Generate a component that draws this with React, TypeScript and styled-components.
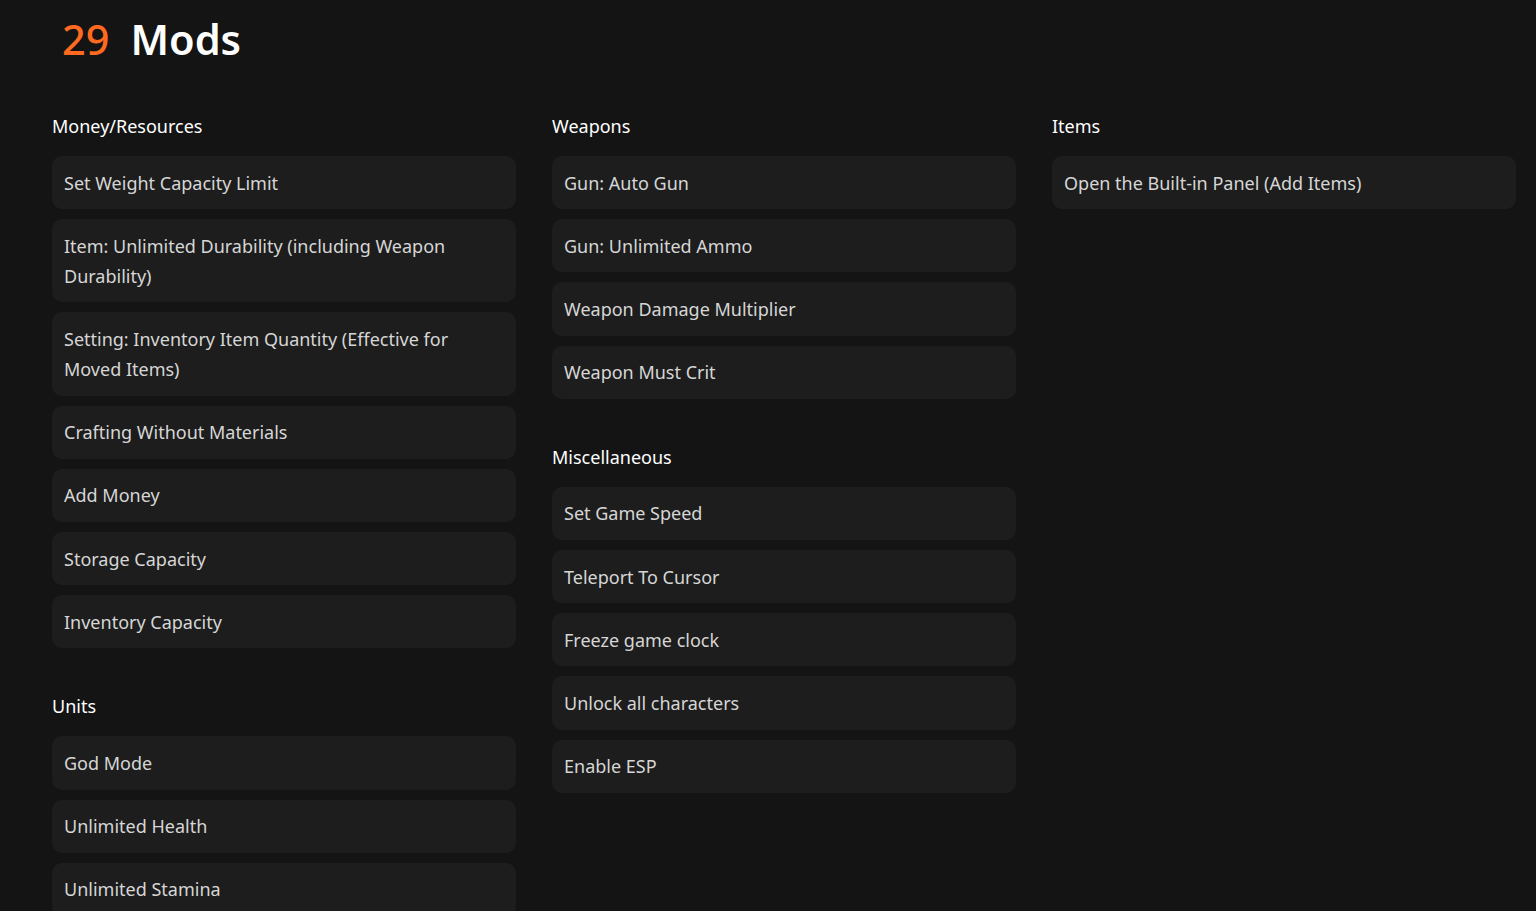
import styled, { createGlobalStyle } from "styled-components";

interface Section {
  title: string;
  mods: string[];
}

const TOTAL_MODS = 29;

const columns: Section[][] = [
  [
    {
      title: "Money/Resources",
      mods: [
        "Set Weight Capacity Limit",
        "Item: Unlimited Durability (including Weapon Durability)",
        "Setting: Inventory Item Quantity (Effective for Moved Items)",
        "Crafting Without Materials",
        "Add Money",
        "Storage Capacity",
        "Inventory Capacity",
      ],
    },
    {
      title: "Units",
      mods: ["God Mode", "Unlimited Health", "Unlimited Stamina"],
    },
  ],
  [
    {
      title: "Weapons",
      mods: [
        "Gun: Auto Gun",
        "Gun: Unlimited Ammo",
        "Weapon Damage Multiplier",
        "Weapon Must Crit",
      ],
    },
    {
      title: "Miscellaneous",
      mods: [
        "Set Game Speed",
        "Teleport To Cursor",
        "Freeze game clock",
        "Unlock all characters",
        "Enable ESP",
      ],
    },
  ],
  [
    {
      title: "Items",
      mods: ["Open the Built-in Panel (Add Items)"],
    },
  ],
];

const GlobalStyle = createGlobalStyle`
  html, body {
    margin: 0;
    background: #141414;
    height: 100%;
    overflow: hidden;
  }
  body {
    font-family: "Noto Sans", "Open Sans", sans-serif;
    color: #d6d6d6;
  }
`;

const App = () => {
  return (
    <Page>
      <GlobalStyle />
      <Heading>
        <Count>{TOTAL_MODS}</Count>
        <span>Mods</span>
      </Heading>
      <Grid>
        {columns.map((col, i) => (
          <Column key={i}>
            {col.map((section) => (
              <Group key={section.title}>
                <GroupTitle>{section.title}</GroupTitle>
                <List>
                  {section.mods.map((mod) => (
                    <ModCard key={mod}>{mod}</ModCard>
                  ))}
                </List>
              </Group>
            ))}
          </Column>
        ))}
      </Grid>
    </Page>
  );
};

const Page = styled.div`
  min-height: 911px;
  padding: 12px 20px 0 52px;
  box-sizing: border-box;
`;

const Heading = styled.h1`
  display: flex;
  align-items: baseline;
  gap: 21px;
  margin: 0 0 0 10px;
  font-size: 41.5px;
  line-height: 54px;
  font-weight: 600;
  color: #ffffff;
`;

const Count = styled.span`
  color: #ff6a20;
  font-weight: 500;
`;

const Grid = styled.div`
  display: grid;
  grid-template-columns: repeat(3, 464px);
  column-gap: 36px;
  margin-top: 48px;
`;

const Column = styled.div`
  display: flex;
  flex-direction: column;
  gap: 46px;
`;

const Group = styled.section`
  display: flex;
  flex-direction: column;
`;

const GroupTitle = styled.h2`
  margin: 0 0 18px;
  font-size: 18px;
  line-height: 24px;
  font-weight: 400;
  color: #ffffff;
`;

const List = styled.div`
  display: flex;
  flex-direction: column;
  gap: 10px;
`;

const ModCard = styled.div`
  background: #1d1d1d;
  border-radius: 10px;
  padding: 11.6px 54px 11.6px 12px;
  font-size: 18px;
  line-height: 30px;
  color: #d6d6d6;
`;

export default App;
